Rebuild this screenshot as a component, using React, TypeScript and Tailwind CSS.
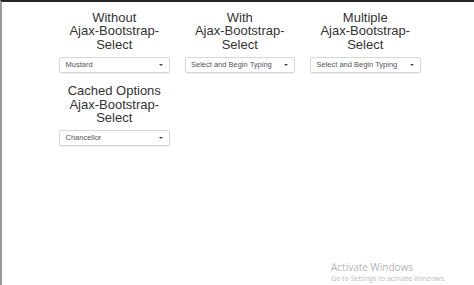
import React from 'react';

interface PickerProps {
    title: string[];
    value: string;
}

function Picker({ title, value }: PickerProps) {
    return (
        <div className="px-[7.5px] flex flex-col items-center">
            <h3 className="text-[13px] leading-[13.4px] text-[#333] text-center font-normal">
                {title.map((line) => (
                    <span key={line} className="block">
                        {line}
                    </span>
                ))}
            </h3>
            <div className="mt-[5.5px] w-full h-[16.5px] border border-[#d6d6d6] rounded-[2px] bg-white shadow-[0_1px_1px_rgba(0,0,0,0.06)] flex items-center justify-between pl-[5.5px] pr-[6px]">
                <span className="text-[7.5px] text-[#555] leading-none">{value}</span>
                <span className="w-0 h-0 border-l-[2.5px] border-r-[2.5px] border-t-[2.5px] border-l-transparent border-r-transparent border-t-[#444]" />
            </div>
        </div>
    );
}

export default function App() {
    const pickers: PickerProps[] = [
        { title: ['Without', 'Ajax-Bootstrap-', 'Select'], value: 'Mustard' },
        { title: ['With', 'Ajax-Bootstrap-', 'Select'], value: 'Select and Begin Typing' },
        { title: ['Multiple', 'Ajax-Bootstrap-', 'Select'], value: 'Select and Begin Typing' },
        { title: ['Cached Options', 'Ajax-Bootstrap-', 'Select'], value: 'Chancellor' },
    ];

    return (
        <div
            className="relative w-[474px] h-[285px] overflow-hidden bg-white border-t-2 border-t-[#262626] border-l-2 border-l-[#9a9a9a]"
            style={{ fontFamily: '"Liberation Sans", Arial, sans-serif' }}
        >
            <div className="grid grid-cols-[125.5px_125.5px_125.5px] gap-y-[11px] pl-[49.5px] pt-[9px]">
                {pickers.map((p) => (
                    <Picker key={p.title[0]} title={p.title} value={p.value} />
                ))}
            </div>

            {/* windows activation watermark */}
            <div
                className="absolute left-[329px] top-[259px] text-[#b4b4b4]"
                style={{ fontFamily: '"Open Sans", "Noto Sans", sans-serif' }}
            >
                <div className="text-[10px] leading-[13px]">Activate Windows</div>
                <div className="text-[7px] leading-[10px] text-[#bdbdbd]">Go to Settings to activate Windows.</div>
            </div>
        </div>
    );
}
